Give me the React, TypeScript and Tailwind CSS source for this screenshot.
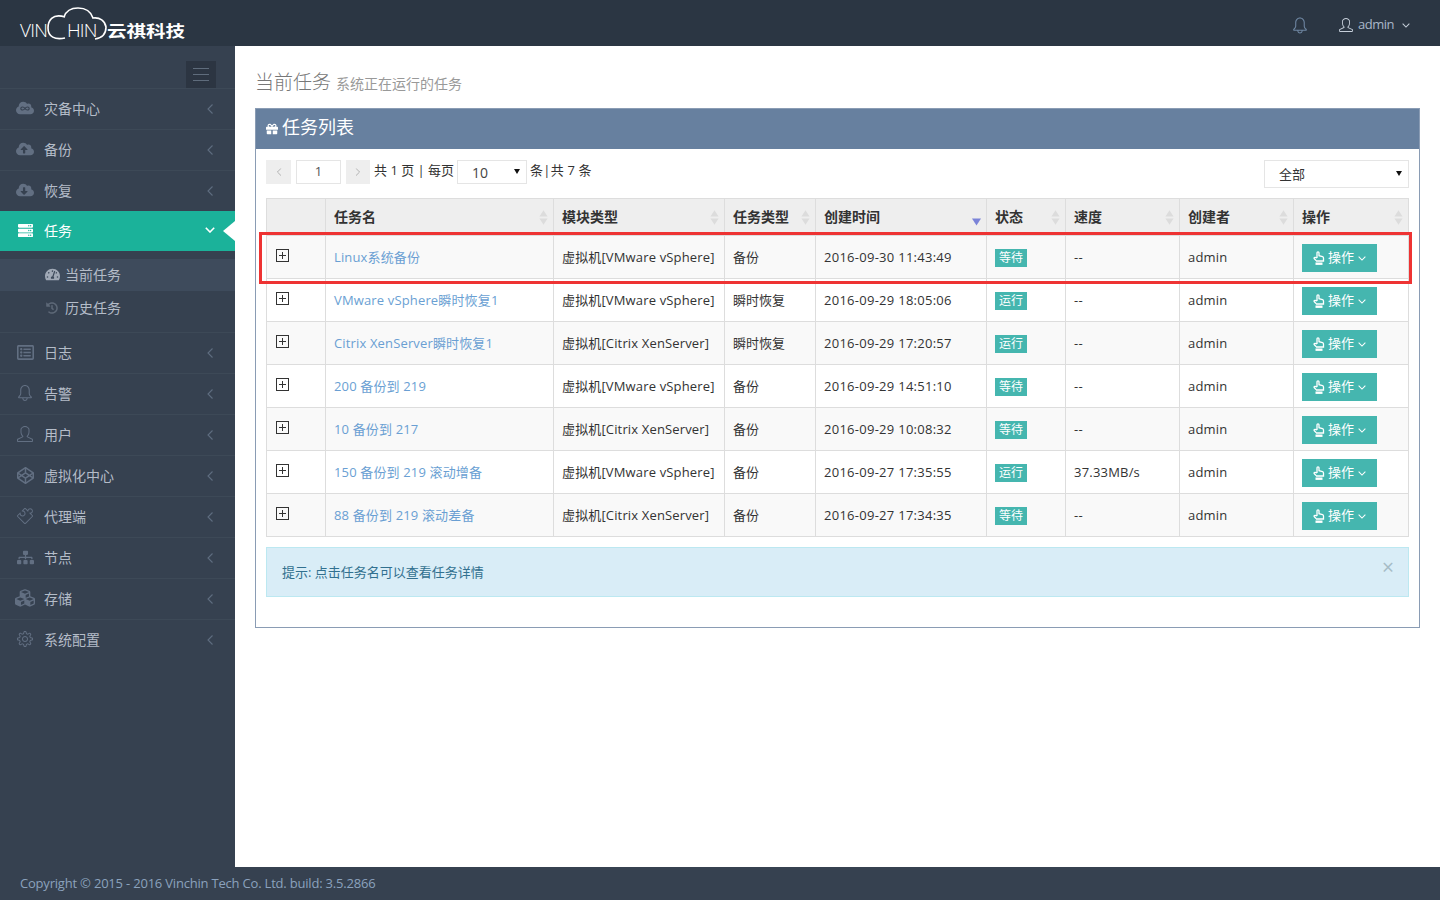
import { FaCloud, FaCloudUploadAlt, FaCloudDownloadAlt, FaServer, FaTachometerAlt, FaHistory, FaRegListAlt, FaCodepen, FaSitemap, FaCubes, FaGift } from "react-icons/fa";
import { SlBell, SlUser, SlPuzzle, SlSettings } from "react-icons/sl";
import type { ReactNode } from "react";

const font = "font-['Open_Sans','Noto_Sans_CJK_SC',sans-serif]";

const topItems: { label: string; icon: ReactNode }[] = [
  {
    label: "灾备中心",
    icon: (
      <span className="relative flex">
        <FaCloud className="w-[18px] h-[18px]" />
        <svg viewBox="0 0 12 6" className="absolute left-[4px] top-[7px] w-[10px] h-[5px]" fill="none" stroke="#364150" strokeWidth="1.3">
          <path d="M6 3C4.500 .5 1 .5 1 3s3.500 2.500 5 0 5-2.500 5 0-3.500 2.500-5 0z" />
        </svg>
      </span>
    ),
  },
  { label: "备份", icon: <FaCloudUploadAlt className="w-[18px] h-[18px]" /> },
  { label: "恢复", icon: <FaCloudDownloadAlt className="w-[18px] h-[18px]" /> },
];

const bottomItems: { label: string; icon: ReactNode }[] = [
  { label: "日志", icon: <FaRegListAlt className="w-[17px] h-[17px]" /> },
  { label: "告警", icon: <SlBell className="w-[16px] h-[16px]" /> },
  { label: "用户", icon: <SlUser className="w-[16px] h-[16px]" /> },
  { label: "虚拟化中心", icon: <FaCodepen className="w-[17px] h-[17px]" /> },
  { label: "代理端", icon: <SlPuzzle className="w-[16px] h-[16px]" /> },
  { label: "节点", icon: <FaSitemap className="w-[17px] h-[17px]" /> },
  { label: "存储", icon: <FaCubes className="w-[20px] h-[20px]" /> },
  { label: "系统配置", icon: <SlSettings className="w-[16px] h-[16px]" /> },
];

const rows = [
  ["Linux系统备份", "虚拟机[VMware vSphere]", "备份", "2016-09-30 11:43:49", "等待", "--"],
  ["VMware vSphere瞬时恢复1", "虚拟机[VMware vSphere]", "瞬时恢复", "2016-09-29 18:05:06", "运行", "--"],
  ["Citrix XenServer瞬时恢复1", "虚拟机[Citrix XenServer]", "瞬时恢复", "2016-09-29 17:20:57", "运行", "--"],
  ["200 备份到 219", "虚拟机[VMware vSphere]", "备份", "2016-09-29 14:51:10", "等待", "--"],
  ["10 备份到 217", "虚拟机[Citrix XenServer]", "备份", "2016-09-29 10:08:32", "等待", "--"],
  ["150 备份到 219 滚动增备", "虚拟机[VMware vSphere]", "备份", "2016-09-27 17:35:55", "运行", "37.33MB/s"],
  ["88 备份到 219 滚动差备", "虚拟机[Citrix XenServer]", "备份", "2016-09-27 17:34:35", "等待", "--"],
];

const headers = ["", "任务名", "模块类型", "任务类型", "创建时间", "状态", "速度", "创建者", "操作"];

function ChevronLeft({ className = "" }: { className?: string }) {
  return (
    <svg viewBox="0 0 6 10" className={`w-[6px] h-[10px] ${className}`} fill="none" stroke="currentColor" strokeWidth="1.1">
      <path d="M5.500 .5L1 5l4.500 4.500" />
    </svg>
  );
}

function ChevronDown({ className = "", width = 1.3 }: { className?: string; width?: number }) {
  return (
    <svg viewBox="0 0 10 6" className={className} fill="none" stroke="currentColor" strokeWidth={width}>
      <path d="M.8 .8L5 5l4.200-4.200" />
    </svg>
  );
}

function HandIcon() {
  return (
    <svg viewBox="0 0 12 15" className="w-[12px] h-[15px] mr-[3px]" fill="none" stroke="currentColor" strokeWidth="1.3">
      <path d="M4 7V1.800a1 1 0 0 1 2 0V4.700l3.500 1a1.500 1.500 0 0 1 1 1.400V10H3.500C2.500 8.500 1 8 1 7c0-1 2-.5 3 0" />
      <path d="M2.500 12.700h7" strokeWidth="2.400" />
    </svg>
  );
}

function SelectArrow({ className }: { className: string }) {
  return (
    <svg viewBox="0 0 6 5" className={`absolute w-[6px] h-[5px] ${className}`}>
      <path d="M0 0h6L3 5z" fill="#111" />
    </svg>
  );
}

function SideItem({ label, icon }: { label: string; icon: ReactNode }) {
  return (
    <div className="h-[41px] border-t border-[#3d4957] flex items-center pb-[2px] text-[14px] text-[#b4bcc8]">
      <span className="w-[38px] mr-[6px] shrink-0 flex justify-center pl-[12px] text-[#626f82]">{icon}</span>
      <span>{label}</span>
      <ChevronLeft className="ml-auto mr-[22px] mt-[2px] text-[#5f6d80]" />
    </div>
  );
}

function SortIcon({ active }: { active?: boolean }) {
  if (active) {
    return (
      <svg viewBox="0 0 10 8" className="absolute right-[5px] bottom-[9px] w-[9px] h-[8px]">
        <path d="M0 0h10L5 8z" fill="#7b83d8" />
      </svg>
    );
  }
  return (
    <svg viewBox="0 0 10 16" className="absolute right-[5px] top-[11px] w-[9px] h-[15px]">
      <path d="M5 0l4.500 7h-9zM.5 9h9L5 16z" fill="#dcdcdc" />
    </svg>
  );
}

function Logo() {
  return (
    <div className="relative h-[46px] w-[235px] shrink-0">
      <svg viewBox="0 0 120 46" className="absolute left-0 top-0 w-[120px] h-[46px]" fill="none" stroke="#fff" strokeWidth="1.6">
        <path d="M65 17C52 13 48 21 48 28C48 37 55 40 65 38" />
        <path d="M64 17C66 11 71 8 78 8C86 8 91 12 93 18C100 17 105 21 106 27C106 34 102 38 95 39" />
      </svg>
      <span className="absolute left-[20px] top-[17px] text-[19px] leading-[26px] font-light text-white tracking-[-0.8px]">VIN</span>
      <span className="absolute left-[67px] top-[17px] text-[19px] leading-[26px] font-light text-white tracking-[-0.8px]">HIN</span>
      <span className="absolute left-[107px] top-[20px] text-[16px] leading-[20px] font-bold text-white origin-left scale-x-[1.22] font-['Noto_Sans_CJK_SC',sans-serif]">云祺科技</span>
    </div>
  );
}

export default function App() {
  return (
    <div className={`${font} h-[900px] w-[1440px] flex flex-col overflow-hidden bg-white text-[13px] text-[#333]`}>
      <header className="h-[46px] shrink-0 bg-[#2b3643] flex items-center">
        <Logo />
        <div className="ml-auto flex items-center pt-[4px]">
          <SlBell className="w-[16px] h-[17px] text-[#6f87a3] mr-[31px]" />
          <SlUser className="w-[14px] h-[14px] text-[#c6cfda] mr-[5px]" />
          <span className="text-[13px] text-[#a9b7c9] mr-[8px] tracking-[-0.5px]">admin</span>
          <ChevronDown className="w-[8px] h-[5px] text-[#c6cfda] mr-[30px]" />
        </div>
      </header>

      <div className="flex-1 flex min-h-0">
        <aside className="w-[235px] shrink-0 bg-[#364150]">
          <div className="h-[42px] flex justify-end items-end pr-[19px]">
            <div className="w-[30px] h-[27px] bg-[#2c3542] flex flex-col justify-center gap-[5px] px-[7px]">
              <span className="h-px bg-[#5f6c7c]" />
              <span className="h-px bg-[#5f6c7c]" />
              <span className="h-px bg-[#5f6c7c]" />
            </div>
          </div>
          {topItems.map((it) => (
            <SideItem key={it.label} label={it.label} icon={it.icon} />
          ))}
          <div className="relative h-[40px] bg-[#1bb29a] flex items-center pb-[2px] text-[14px] text-white">
            <span className="w-[38px] mr-[6px] flex justify-center pl-[12px]">
              <FaServer className="w-[17px] h-[15px]" />
            </span>
            <span>任务</span>
            <ChevronDown width={1.6} className="ml-auto mr-[20px] w-[10px] h-[6px]" />
            <span className="absolute right-0 top-[10px] w-0 h-0 border-y-[10px] border-y-transparent border-r-[12px] border-r-white" />
          </div>
          <div className="py-[8px]">
            <div className="h-[32px] bg-[#3e4b5c] flex items-center pb-[2px] text-[14px] text-[#b4bcc8]">
              <span className="w-[65px] flex justify-end pr-[5px] text-[#a0a9b6]">
                <FaTachometerAlt className="w-[15px] h-[15px]" />
              </span>
              <span>当前任务</span>
            </div>
            <div className="h-[33px] flex items-center text-[14px] text-[#b4bcc8]">
              <span className="w-[65px] flex justify-end pr-[7px] text-[#5d6877]">
                <FaHistory className="w-[12px] h-[12px]" />
              </span>
              <span>历史任务</span>
            </div>
          </div>
          {bottomItems.map((it) => (
            <SideItem key={it.label} label={it.label} icon={it.icon} />
          ))}
        </aside>

        <main className="flex-1 relative px-[20px]">
          <div className="h-[62px] flex items-baseline pt-[22px]">
            <h1 className="text-[19px] leading-[28px] font-light text-[#777]">当前任务</h1>
            <span className="ml-[5px] text-[14px] text-[#999]">系统正在运行的任务</span>
          </div>
          <section className="border border-[#8a9cb4] h-[520px]">
            <div className="h-[40px] bg-[#67809f] flex items-center pb-[3px] pl-[10px] text-white text-[18px]">
              <FaGift className="w-[12px] h-[12px] mr-[4px] mt-[2px]" />
              任务列表
            </div>
            <div className="px-[10px]">
              <div className="h-[49px] flex items-start pt-[11px] text-[13px] text-[#333]">
                <button className="w-[25px] h-[24px] bg-[#eee] flex items-center justify-center text-[#aaa]">
                  <ChevronLeft className="scale-[0.8]" />
                </button>
                <div className="ml-[5px] w-[45px] h-[24px] border border-[#e5e5e5] flex items-center justify-center text-[#555]">1</div>
                <button className="ml-[5px] w-[24px] h-[24px] bg-[#eee] flex items-center justify-center text-[#aaa]">
                  <ChevronLeft className="scale-[0.8] rotate-180" />
                </button>
                <span className="ml-[4px] leading-[20px]">共 1 页 | 每页</span>
                <div className="ml-[3px] w-[70px] h-[24px] border border-[#e5e5e5] flex items-center pl-[14px] text-[14px] text-[#444] relative">
                  10
                  <SelectArrow className="right-[6px] top-[8px]" />
                </div>
                <span className="ml-[3px] leading-[20px] tracking-[0.2px]">条|共 7 条</span>
                <div className="ml-auto w-[145px] h-[28px] border border-[#e5e5e5] flex items-center pl-[14px] pt-[2px] text-[13px] relative">
                  全部
                  <SelectArrow className="right-[6px] top-[10px]" />
                </div>
              </div>
              <table className="w-[1143px] table-fixed border-collapse">
                <colgroup>
                  <col className="w-[59px]" />
                  <col className="w-[228px]" />
                  <col className="w-[171px]" />
                  <col className="w-[91px]" />
                  <col className="w-[171px]" />
                  <col className="w-[79px]" />
                  <col className="w-[114px]" />
                  <col className="w-[114px]" />
                  <col className="w-[115px]" />
                </colgroup>
                <thead>
                  <tr className="h-[37px] bg-[#eee]">
                    {headers.map((h, i) => (
                      <th key={i} className="relative border border-[#ddd] px-[8px] pb-[2px] text-left text-[14px] font-bold text-[#333]">
                        {h}
                        {i > 0 && <SortIcon active={i === 4} />}
                      </th>
                    ))}
                  </tr>
                </thead>
                <tbody>
                  {rows.map((r, i) => (
                    <tr key={i} className={`h-[43px] ${i % 2 === 0 ? "bg-[#f9f9f9]" : "bg-white"}`}>
                      <td className="border border-[#ddd] px-[8px] align-top pt-[13px]">
                        <span className="ml-[1px] relative block w-[13px] h-[13px] border border-[#333]">
                          <span className="absolute left-[2px] right-[2px] top-[5px] h-px bg-[#333]" />
                          <span className="absolute top-[2px] bottom-[2px] left-[5px] w-px bg-[#333]" />
                        </span>
                      </td>
                      <td className="border border-[#ddd] px-[8px] pt-[2px] text-[#6a9fd3] whitespace-nowrap tracking-[0.15px]">{r[0]}</td>
                      <td className="border border-[#ddd] px-[8px] pt-[2px] whitespace-nowrap tracking-[0.15px]">{r[1]}</td>
                      <td className="border border-[#ddd] px-[8px] pt-[2px]">{r[2]}</td>
                      <td className="border border-[#ddd] px-[8px] pt-[2px] whitespace-nowrap tracking-[0.27px]">{r[3]}</td>
                      <td className="border border-[#ddd] px-[8px] pt-[2px]">
                        <span className="block h-[18px] leading-[18px] w-[32px] text-center bg-[#45b6af] text-white text-[12px]">{r[4]}</span>
                      </td>
                      <td className="border border-[#ddd] px-[8px] pt-[2px] tracking-[0.2px]">{r[5]}</td>
                      <td className="border border-[#ddd] px-[8px] pt-[2px] tracking-[0.2px]">admin</td>
                      <td className="border border-[#ddd] px-[8px] pt-[2px]">
                        <button className="h-[28px] w-[75px] bg-[#45b6af] text-white flex items-center justify-center text-[13px]">
                          <HandIcon />
                          操作
                          <ChevronDown className="w-[8px] h-[5px] ml-[4px]" />
                        </button>
                      </td>
                    </tr>
                  ))}
                </tbody>
              </table>
              <div className="relative mt-[10px] h-[50px] bg-[#d9edf7] border border-[#bce8f1] flex items-center pt-[2px] pl-[15px] text-[#31708f] text-[13px]">
                提示: 点击任务名可以查看任务详情
                <span className="absolute right-[14px] top-[9px] text-[21px] leading-[20px] text-[#a6bcc6]">×</span>
              </div>
            </div>
          </section>
          <div className="absolute left-[24px] top-[186px] w-[1153px] h-[52px] border-[3px] border-[#ee3333] pointer-events-none" />
        </main>
      </div>

      <footer className="h-[33px] shrink-0 bg-[#364150] flex items-center pl-[20px] text-[13px] tracking-[-0.2px] text-[#8ba2bd]">
        Copyright © 2015 - 2016 Vinchin Tech Co. Ltd. build: 3.5.2866
      </footer>
    </div>
  );
}
